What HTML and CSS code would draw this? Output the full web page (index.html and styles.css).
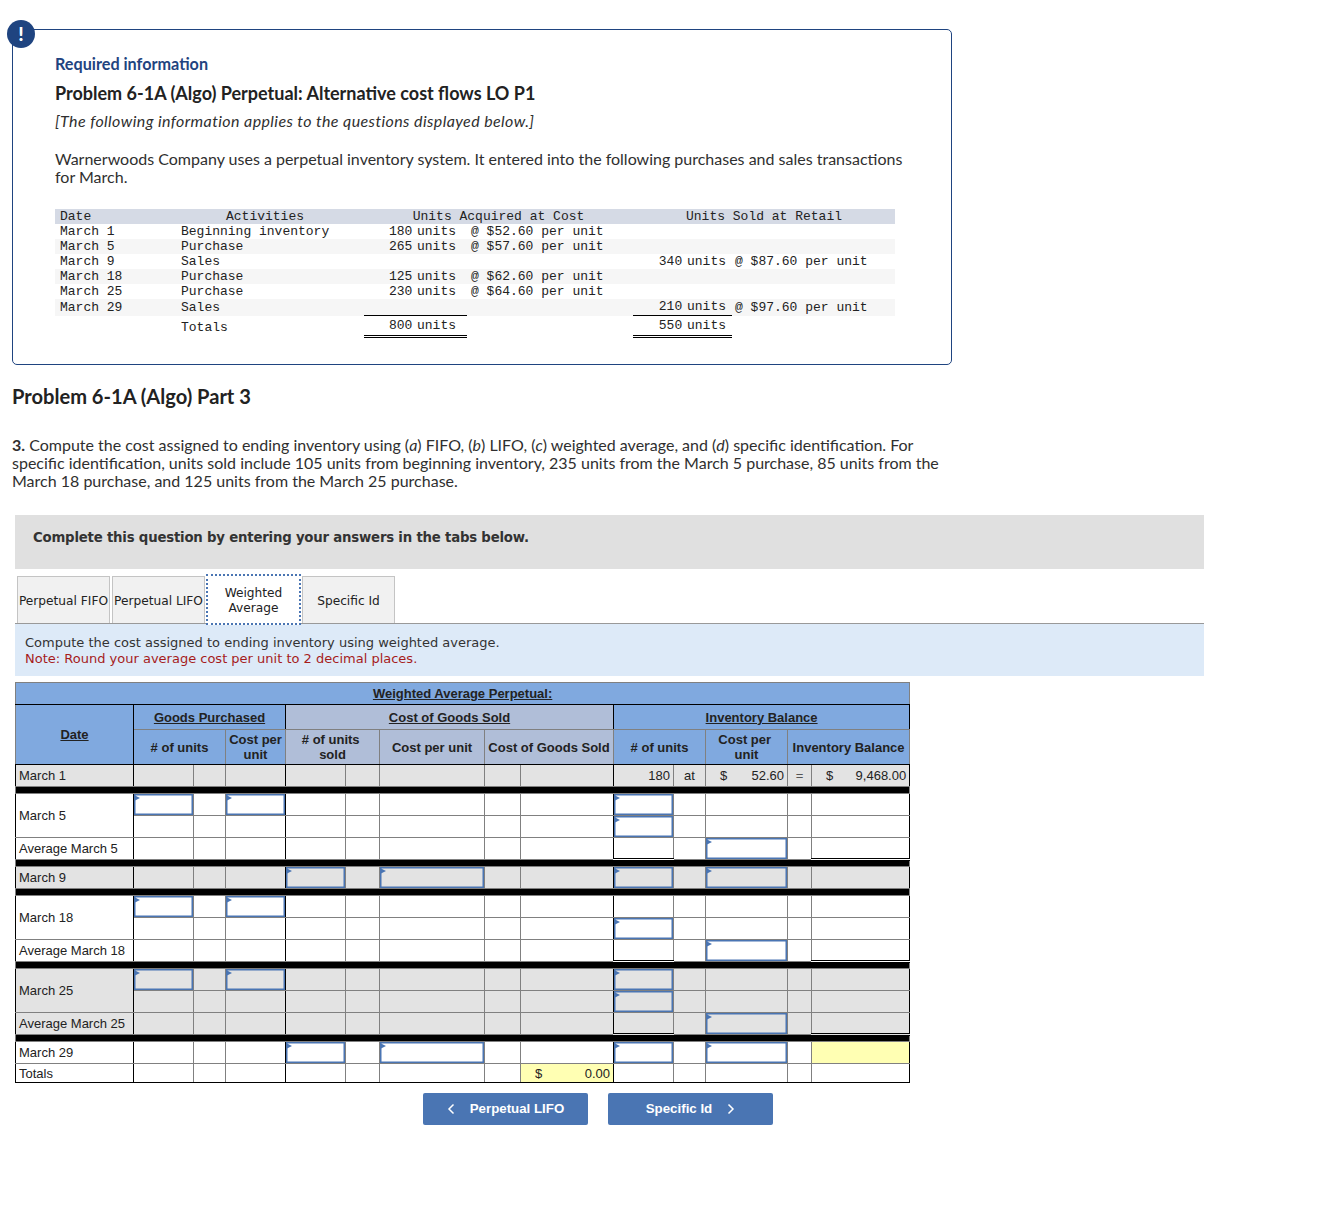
FILE: index.html
```html
<!DOCTYPE html>
<html lang="en">
<head>
<meta charset="utf-8">
<title>Problem 6-1A (Algo) Part 3</title>
<link rel="stylesheet" href="styles.css">
</head>
<body>
<section class="info">
  <div class="badge">!</div>
  <h3 class="req">Required information</h3>
  <h2 class="title">Problem 6-1A (Algo) Perpetual: Alternative cost flows LO P1</h2>
  <p class="lead">[The following information applies to the questions displayed below.]</p>
  <p class="body-text">Warnerwoods Company uses a perpetual inventory system. It entered into the following purchases and sales transactions for March.</p>
  <table class="facts">
    <colgroup><col class="f1"><col class="f2"><col class="f3"><col class="f4"><col class="f5"><col class="f6"><col class="f7"></colgroup>
    <tr class="fh"><td class="pl">Date</td><td class="c">Activities</td><td></td><td colspan="2" class="c">Units Acquired at Cost</td><td colspan="2" class="c">Units Sold at Retail</td></tr>
    <tr><td class="pl">March 1</td><td class="pa">Beginning inventory</td><td></td><td class="q">180 units</td><td class="pr">@ $52.60 per unit</td><td></td><td></td></tr>
    <tr class="st"><td class="pl">March 5</td><td class="pa">Purchase</td><td></td><td class="q">265 units</td><td class="pr">@ $57.60 per unit</td><td></td><td></td></tr>
    <tr><td class="pl">March 9</td><td class="pa">Sales</td><td></td><td></td><td></td><td class="q2">340 units</td><td class="pr2">@ $87.60 per unit</td></tr>
    <tr class="st"><td class="pl">March 18</td><td class="pa">Purchase</td><td></td><td class="q">125 units</td><td class="pr">@ $62.60 per unit</td><td></td><td></td></tr>
    <tr><td class="pl">March 25</td><td class="pa">Purchase</td><td></td><td class="q">230 units</td><td class="pr">@ $64.60 per unit</td><td></td><td></td></tr>
    <tr class="st tall"><td class="pl">March 29</td><td class="pa">Sales</td><td></td><td class="ul"></td><td></td><td class="q2 ul">210 units</td><td class="pr2">@ $97.60 per unit</td></tr>
    <tr class="tot"><td></td><td class="pa tl">Totals</td><td></td><td class="q dl">800 units</td><td></td><td class="q2 dl">550 units</td><td></td></tr>
  </table>
</section>

<h2 class="part">Problem 6-1A (Algo) Part 3</h2>
<p class="question"><b>3.</b> Compute the cost assigned to ending inventory using (<i>a</i>) FIFO, (<i>b</i>) LIFO, (<i>c</i>) weighted average, and (<i>d</i>) specific identification. For specific identification, units sold include 105 units from beginning inventory, 235 units from the March 5 purchase, 85 units from the March 18 purchase, and 125 units from the March 25 purchase.</p>

<div class="band">Complete this question by entering your answers in the tabs below.</div>
<div class="tabs">
  <div class="tab">Perpetual FIFO</div>
  <div class="tab">Perpetual LIFO</div>
  <div class="tab active">Weighted<br>Average</div>
  <div class="tab">Specific Id</div>
</div>
<div class="note">
  <div>Compute the cost assigned to ending inventory using weighted average.</div>
  <div class="red">Note: Round your average cost per unit to 2 decimal places.</div>
</div>

<table class="grid">
  <colgroup>
    <col class="w118"><col class="w60"><col class="w32"><col class="w60"><col class="w60"><col class="w34"><col class="w105"><col class="w36"><col class="w93"><col class="w60"><col class="w32"><col class="w82"><col class="w24"><col class="w98">
  </colgroup>
  <thead>
    <tr class="h22"><th colspan="14" class="blue top"><u>Weighted Average Perpetual:</u></th></tr>
    <tr class="h25">
      <th rowspan="2" class="blue vb"><u>Date</u></th>
      <th colspan="3" class="blue vb"><u>Goods Purchased</u></th>
      <th colspan="5" class="slate vb"><u>Cost of Goods Sold</u></th>
      <th colspan="5" class="blue vb"><u>Inventory Balance</u></th>
    </tr>
    <tr class="h35">
      <th colspan="2" class="blue">&#35; of units</th>
      <th class="blue">Cost per unit</th>
      <th colspan="2" class="slate vl">&#35; of units&nbsp;<br>sold</th>
      <th class="slate">Cost per unit</th>
      <th colspan="2" class="slate">Cost of Goods Sold</th>
      <th colspan="2" class="blue vl">&#35; of units</th>
      <th class="blue">Cost per&nbsp;<br>unit</th>
      <th colspan="2" class="blue">Inventory Balance</th>
    </tr>
  </thead>
  <tbody>
    <tr class="h22 grey"><td>March 1</td><td></td><td></td><td></td><td></td><td></td><td></td><td></td><td></td><td class="r">180</td><td class="c2">at</td><td><span class="money"><span>$</span><span>52.60</span></span></td><td class="c2 eq">=</td><td><span class="money"><span>$</span><span>9,468.00</span></span></td></tr>
    <tr class="h7"><td colspan="14" class="bar"></td></tr>
    <tr class="h22"><td rowspan="2">March 5</td><td class="in"></td><td></td><td class="in"></td><td></td><td></td><td></td><td></td><td></td><td class="in"></td><td></td><td></td><td></td><td></td></tr>
    <tr class="h22"><td></td><td></td><td></td><td></td><td></td><td></td><td></td><td></td><td class="in"></td><td></td><td></td><td></td><td></td></tr>
    <tr class="h22"><td>Average March 5</td><td></td><td></td><td></td><td></td><td></td><td></td><td></td><td></td><td class="dbl"></td><td></td><td class="in"></td><td></td><td class="dbl"></td></tr>
    <tr class="h7"><td colspan="14" class="bar"></td></tr>
    <tr class="h22 grey"><td>March 9</td><td></td><td></td><td></td><td class="in"></td><td></td><td class="in"></td><td></td><td></td><td class="in"></td><td></td><td class="in"></td><td></td><td></td></tr>
    <tr class="h7"><td colspan="14" class="bar"></td></tr>
    <tr class="h22"><td rowspan="2">March 18</td><td class="in"></td><td></td><td class="in"></td><td></td><td></td><td></td><td></td><td></td><td></td><td></td><td></td><td></td><td></td></tr>
    <tr class="h22"><td></td><td></td><td></td><td></td><td></td><td></td><td></td><td></td><td class="in"></td><td></td><td></td><td></td><td></td></tr>
    <tr class="h22"><td>Average March 18</td><td></td><td></td><td></td><td></td><td></td><td></td><td></td><td></td><td class="dbl"></td><td></td><td class="in"></td><td></td><td class="dbl"></td></tr>
    <tr class="h7"><td colspan="14" class="bar"></td></tr>
    <tr class="h22 grey"><td rowspan="2">March 25</td><td class="in"></td><td></td><td class="in"></td><td></td><td></td><td></td><td></td><td></td><td class="in"></td><td></td><td></td><td></td><td></td></tr>
    <tr class="h22 grey"><td></td><td></td><td></td><td></td><td></td><td></td><td></td><td></td><td class="in"></td><td></td><td></td><td></td><td></td></tr>
    <tr class="h22 grey"><td>Average March 25</td><td></td><td></td><td></td><td></td><td></td><td></td><td></td><td></td><td class="dbl"></td><td></td><td class="in"></td><td></td><td class="dbl"></td></tr>
    <tr class="h7"><td colspan="14" class="bar"></td></tr>
    <tr class="h22"><td>March 29</td><td></td><td></td><td></td><td class="in"></td><td></td><td class="in"></td><td></td><td></td><td class="in"></td><td></td><td class="in"></td><td></td><td class="yellow"></td></tr>
    <tr class="h19 last"><td>Totals</td><td></td><td></td><td></td><td></td><td></td><td></td><td></td><td class="yellow total"><span class="money"><span>$</span><span>0.00</span></span></td><td></td><td></td><td></td><td></td><td></td></tr>
  </tbody>
</table>

<nav class="pager">
  <a class="btn">
    <svg class="chev" width="8" height="12" viewBox="0 0 8 12"><path d="M6.500 1.500 2 6l4.500 4.500" fill="none" stroke="#fff" stroke-width="1.5"/></svg>
    <span>Perpetual LIFO</span>
  </a>
  <a class="btn">
    <span>Specific Id</span>
    <svg class="chev" width="8" height="12" viewBox="0 0 8 12"><path d="M1.500 1.500 6 6l-4.500 4.500" fill="none" stroke="#fff" stroke-width="1.5"/></svg>
  </a>
</nav>
</body>
</html>
```
FILE: styles.css
```css
* { box-sizing: border-box; }
html, body { margin: 0; padding: 0; background: #fff; }
body {
  padding: 29px 0 87px;
  font-family: "Lato", "Noto Sans", sans-serif;
  font-size: 16px;
  line-height: 18px;
  color: #2f2f2f;
}

.info {
  position: relative;
  width: 940px;
  height: 336px;
  margin-left: 12px;
  padding: 25px 42px 0;
  border: 1px solid #1f4480;
  border-radius: 5px;
}
.badge {
  position: absolute;
  left: -6px;
  top: -10px;
  width: 28px;
  height: 28px;
  border-radius: 50%;
  background: #1f4480;
  color: #fff;
  font-weight: 900;
  font-size: 19px;
  line-height: 28px;
  text-align: center;
}
.req { margin: 0; font-size: 16.200px; font-weight: 700; color: #1f4480; }
.title { margin: 10px 0 0; font-size: 18px; line-height: 20px; font-weight: 700; color: #222; }
.lead { margin: 9px 0 0; font-style: italic; letter-spacing: .4px; }
.body-text { margin: 20px 0 0; width: 860px; }

.facts {
  margin-top: 23px;
  width: 840px;
  table-layout: fixed;
  border-collapse: collapse;
  font-family: "Liberation Mono", monospace;
  font-size: 13px;
  line-height: 15px;
  color: #222;
}
.f1 { width: 121px; } .f2 { width: 178px; } .f3 { width: 10px; }
.f4 { width: 103px; } .f5 { width: 166px; } .f6 { width: 99px; } .f7 { width: 163px; }
.facts td { padding: 0; height: 15px; white-space: pre; }
.fh td { background: #d5dae5; }
.st td { background: #f6f6f6; }
.tall td { height: 16px; line-height: 16px; vertical-align: bottom; }
.tot td { height: 21px; vertical-align: top; line-height: 19px; }
.facts .pl { padding-left: 5px; }
.facts .pa { padding-left: 5px; }
.facts .c { text-align: center; }
.facts .q { text-align: right; padding-right: 11px; word-spacing: -3.200px; }
.facts .q2 { text-align: right; padding-right: 6px; word-spacing: -3px; }
.facts .pr { padding-left: 4px; }
.facts .pr2 { padding-left: 3px; }
.facts .ul { border-bottom: 1px solid #000; }
.facts .dl { border-bottom: 3px double #000; line-height: 19px; }
.facts .tl { padding-top: 3px; line-height: 18px; }

.part { margin: 20px 0 0 12px; font-size: 20.100px; line-height: 22px; font-weight: 700; color: #222; }
.question { margin: 29px 0 0 12px; width: 930px; }
.question b { font-weight: 700; }

.band {
  margin: 25px 0 0 15px;
  width: 1189px;
  height: 54px;
  padding: 14px 18px 0;
  background: #e0e0e0;
  font-family: "DejaVu Sans", sans-serif;
  font-size: 13.300px;
  letter-spacing: -.21px;
  font-weight: 700;
  line-height: 17px;
  color: #333;
}
.tabs { display: flex; margin: 7px 0 0 17px; gap: 2px; font-family: "DejaVu Sans", sans-serif; font-size: 12.2px; line-height: 15px; }
.tab {
  width: 93px;
  height: 47px;
  padding-top: 2px;
  display: flex;
  align-items: center;
  justify-content: center;
  text-align: center;
  white-space: nowrap;
  border: 1px solid #c4c4c4;
  border-bottom: 0;
  background: #f1f1f1;
  color: #222;
}
.tab.active {
  background: #fff;
  margin: -2px -1px -2px -1px;
  width: 95px;
  height: 51px;
  padding-top: 3px;
  border: 2px dotted #4a75b3;
  position: relative;
  z-index: 1;
}
.note {
  margin-left: 15px;
  width: 1189px;
  height: 53px;
  padding: 11px 10px 0;
  background: #ddeaf8;
  border-top: 1px solid #999;
  font-family: "DejaVu Sans", sans-serif;
  font-size: 13px;
  line-height: 16px;
  color: #333;
}
.red { color: #a61c1c; }

.grid {
  margin: 6px 0 0 15px;
  width: 895px;
  table-layout: fixed;
  border-collapse: collapse;
  font-family: "Liberation Sans", Arial, sans-serif;
  font-size: 13px;
  color: #222;
}
.w118 { width: 118px; } .w60 { width: 60px; } .w32 { width: 32px; } .w34 { width: 34px; }
.w105 { width: 105px; } .w36 { width: 36px; } .w93 { width: 93px; } .w82 { width: 82px; }
.w24 { width: 24px; } .w98 { width: 98px; }
.h22 { height: 22px; } .h25 { height: 25px; } .h35 { height: 35px; } .h7 { height: 7px; } .h19 { height: 19px; }

.grid th {
  padding: 0 1px;
  border: 1px solid #808080;
  font-weight: 700;
  line-height: 15px;
  text-align: center;
  vertical-align: middle;
}
.grid th.top { border-bottom-color: #000; border-top-color: #808080; border-left-color: #808080; }
.grid th.vb { border-left-color: #000; border-right-color: #000; }
.grid th.vl { border-left-color: #000; }
.grid thead tr:last-child th { border-bottom-color: #000; }
.grid thead tr:nth-child(2) th:first-child { border-bottom-color: #000; border-left-color: #808080; }
.blue { background: #80a9df; }
.slate { background: #b0bed8; }

.grid td {
  padding: 0 3px;
  border: 1px solid #808080;
  line-height: 14px;
  white-space: nowrap;
  overflow: visible;
}
.grid tbody td:nth-last-child(14) { border-right-color: #000; border-left-color: #000; }
.grid tbody td:nth-last-child(13) { border-left-color: #000; }
.grid tbody td:nth-last-child(11) { border-right-color: #000; }
.grid tbody td:nth-last-child(10) { border-left-color: #000; }
.grid tbody td:nth-last-child(6) { border-right-color: #000; }
.grid tbody td:nth-last-child(5) { border-left-color: #000; }
.grid tbody td:last-child { border-right-color: #000; }
.grid tbody td.bar { background: #000; border-color: #808080; padding: 0; }
.grey td { background: #e3e3e3; }
.last td { border-bottom-color: #000; line-height: 13px; }
.grid td.r { text-align: right; }
.grid td.c2 { text-align: center; padding: 0; }
.grid td.eq { color: #555; }
.money { display: flex; justify-content: space-between; padding-left: 11px; }
.grid td.dbl { border-top-color: #000; border-bottom: 3px double #000; }
.grid td.yellow { background: #ffffb3; }
.grid td.total { border-left-color: #000; border-right-color: #000; border-top-color: #000; }

.grid td.in { position: relative; box-shadow: inset 0 0 0 1.5px #4a75b3; }
.grid td.in::before {
  content: "";
  position: absolute;
  left: 0;
  top: 1px;
  border-left: 6px solid #4a75b3;
  border-top: 3.5px solid transparent;
  border-bottom: 3.5px solid transparent;
}

.pager { display: flex; gap: 20px; margin: 10px 0 0 423px; }
.btn {
  width: 165px;
  height: 32px;
  display: flex;
  align-items: center;
  justify-content: center;
  gap: 15px;
  border-radius: 2px;
  background: #4a75b3;
  color: #fff;
  font-family: "Liberation Sans", Arial, sans-serif;
  font-size: 13.300px;
  font-weight: 700;
}
```
